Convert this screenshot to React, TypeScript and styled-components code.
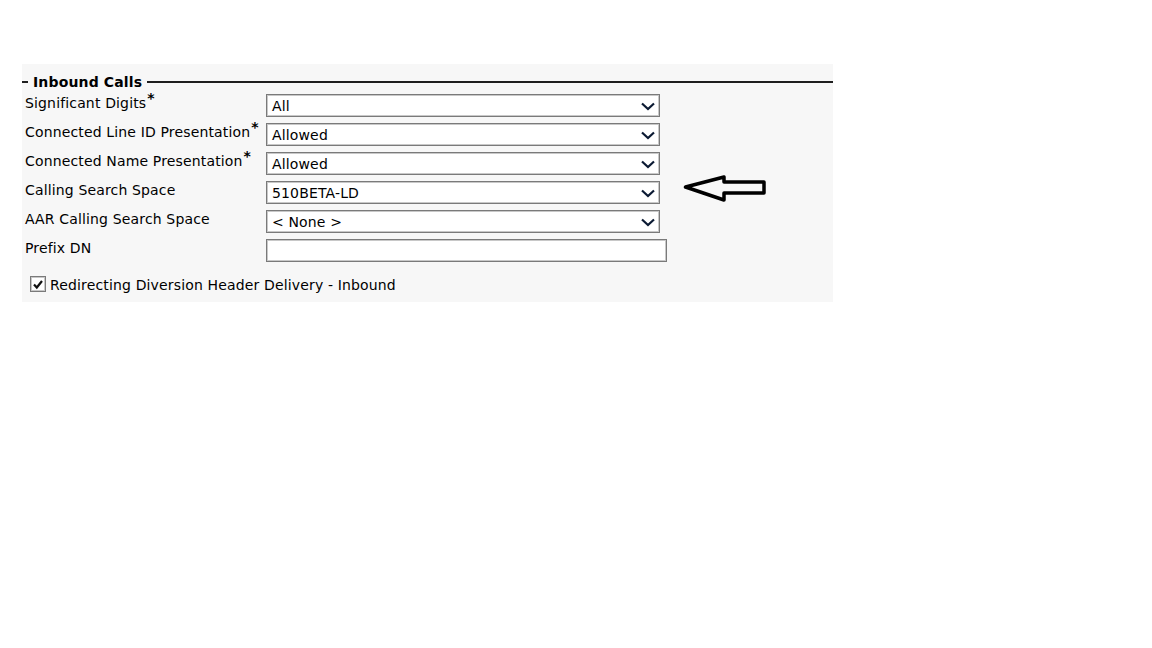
import React from 'react';
import styled, { createGlobalStyle } from 'styled-components';

const GlobalStyle = createGlobalStyle`
    html, body {
        margin: 0;
        padding: 0;
        background: #fff;
    }
    body {
        font-family: "DejaVu Sans", Verdana, sans-serif;
        font-size: 14px;
        letter-spacing: 0.15px;
        color: #000;
    }
`;

const Page = styled.div`
    padding: 64px 0 0 22px;
`;

const Panel = styled.div`
    width: 811px;
    height: 238px;
    box-sizing: border-box;
    background: #f7f7f7;
    padding-top: 10px;
`;

const Fieldset = styled.fieldset`
    margin: 0;
    padding: 4px 0 0 3px;
    border: none;
    border-top: 2px solid #1e1e1e;
    min-width: 0;
`;

const Legend = styled.legend`
    margin-left: 3px;
    padding: 0 5px 0 5px;
    font-weight: bold;
    line-height: 16px;
`;

const Row = styled.div`
    display: flex;
    align-items: flex-start;
    height: 23px;
    margin-bottom: 6px;
`;

const Label = styled.div`
    width: 241px;
    padding-top: 1px;
    line-height: 16px;
    white-space: nowrap;
`;

const Required = styled.sup`
    font-weight: bold;
    font-size: 14px;
    line-height: 0;
    vertical-align: 5px;
    margin-left: 1px;
`;

const SelectBox = styled.div`
    width: 394px;
    height: 23px;
    box-sizing: border-box;
    display: flex;
    align-items: center;
    justify-content: space-between;
    padding: 1px 4px 0 5px;
    background: #fff;
    border: 1px solid #7a7a7a;
    box-shadow: inset 0 0 0 1px #c8c8c8;
    line-height: 16px;
`;

const TextInput = styled.div`
    width: 401px;
    height: 23px;
    box-sizing: border-box;
    background: #fff;
    border: 1px solid #7a7a7a;
    box-shadow: inset 0 0 0 1px #c8c8c8;
`;

const CheckRow = styled.div`
    display: flex;
    align-items: center;
    gap: 4px;
    margin: 13px 0 0 5px;
    line-height: 16px;
`;

const Checkbox = styled.div`
    width: 16px;
    height: 16px;
    box-sizing: border-box;
    border: 1px solid #7a7a7a;
    box-shadow: inset 0 0 0 1px #c8c8c8;
    background: #fff;
    display: flex;
    align-items: center;
    justify-content: center;
`;

const CheckText = styled.span`
    padding-top: 2px;
`;

const Pointer = styled.svg`
    margin: -6px 0 0 23px;
    flex-shrink: 0;
`;

function Chevron() {
    return (
        <svg width="14" height="9" viewBox="0 0 14 9">
            <path d="M1 1.5 L7 7 L13 1.5" fill="none" stroke="#0b1a33" strokeWidth="2.2" />
        </svg>
    );
}

function Select({ value }: { value: string }) {
    return (
        <SelectBox>
            <span>{value}</span>
            <Chevron />
        </SelectBox>
    );
}

const rows = [
    { label: 'Significant Digits', required: true, value: 'All' },
    { label: 'Connected Line ID Presentation', required: true, value: 'Allowed' },
    { label: 'Connected Name Presentation', required: true, value: 'Allowed' },
    { label: 'Calling Search Space', required: false, value: '510BETA-LD', marked: true },
    { label: 'AAR Calling Search Space', required: false, value: '< None >' },
];

export default function App() {
    return (
        <Page>
            <GlobalStyle />
            <Panel>
                <Fieldset>
                    <Legend>Inbound Calls</Legend>
                    {rows.map(r => (
                        <Row key={r.label}>
                            <Label>
                                {r.label}
                                {r.required && <Required>*</Required>}
                            </Label>
                            <Select value={r.value} />
                            {r.marked && (
                                <Pointer width="84" height="28" viewBox="0 0 84 28">
                                    <path
                                        d="M2.5 12 L41 2 L41 7 L81 7 L81 18 L41 18 L41 25 Z"
                                        fill="none"
                                        stroke="#000"
                                        strokeWidth="3.5"
                                        strokeLinejoin="round"
                                    />
                                </Pointer>
                            )}
                        </Row>
                    ))}
                    <Row>
                        <Label>Prefix DN</Label>
                        <TextInput />
                    </Row>
                    <CheckRow>
                        <Checkbox>
                            <svg width="12" height="11" viewBox="0 0 12 11">
                                <path d="M2 5.5 L4.8 8.5 L10 2" fill="none" stroke="#111" strokeWidth="2.2" />
                            </svg>
                        </Checkbox>
                        <CheckText>Redirecting Diversion Header Delivery - Inbound</CheckText>
                    </CheckRow>
                </Fieldset>
            </Panel>
        </Page>
    );
}
